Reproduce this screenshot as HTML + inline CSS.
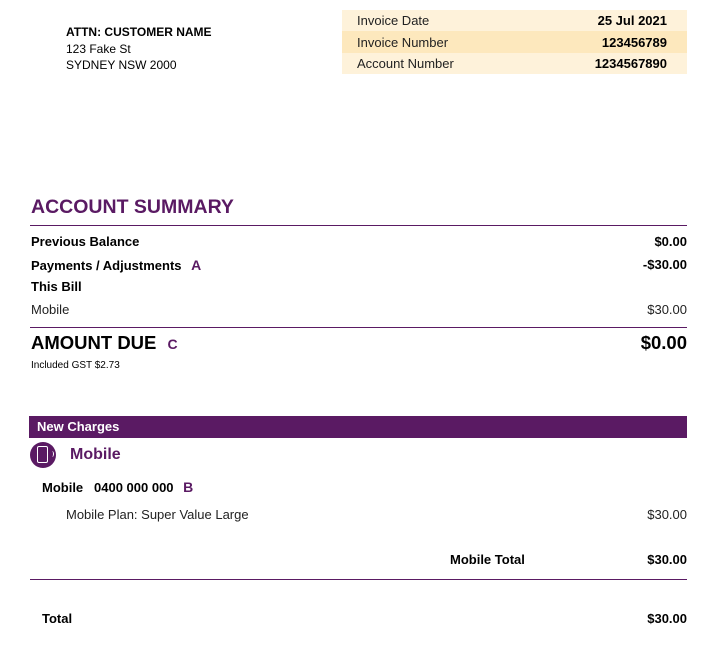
<!DOCTYPE html>
<html><head><meta charset="utf-8"><style>
body{margin:0;width:726px;height:648px;background:#fff;font-family:"Liberation Sans",Arial,sans-serif;color:#000;position:relative;overflow:hidden}
.a{position:absolute;white-space:nowrap}
.r{text-align:right}
.b{font-weight:bold}
.p{color:#5a1a63}
.line{position:absolute;left:30px;width:657px;height:1px;background:#5a1a63}
</style></head><body>
<div class="a b" style="left:66px;top:25px;font-size:12px">ATTN: CUSTOMER NAME</div>
<div class="a" style="left:66px;top:42px;font-size:12px">123 Fake St</div>
<div class="a" style="left:66px;top:58px;font-size:12px">SYDNEY NSW 2000</div>

<div class="a" style="left:342px;top:10px;width:345px;height:21px;background:#fef2da"></div>
<div class="a" style="left:342px;top:31px;width:345px;height:22px;background:#fde8bd"></div>
<div class="a" style="left:342px;top:53px;width:345px;height:21px;background:#fef2da"></div>
<div class="a" style="left:357px;top:13px;font-size:13px;color:#222">Invoice Date</div>
<div class="a" style="left:357px;top:35px;font-size:13px;color:#222">Invoice Number</div>
<div class="a" style="left:357px;top:56px;font-size:13px;color:#222">Account Number</div>
<div class="a b r" style="right:59px;top:13px;font-size:13px">25 Jul 2021</div>
<div class="a b r" style="right:59px;top:35px;font-size:13px">123456789</div>
<div class="a b r" style="right:59px;top:56px;font-size:13px">1234567890</div>

<div class="a b p" style="left:31px;top:196px;font-size:19.5px">ACCOUNT SUMMARY</div>
<div class="line" style="top:225px"></div>
<div class="a b" style="left:31px;top:234px;font-size:13px">Previous Balance</div>
<div class="a b r" style="right:39px;top:234px;font-size:13px">$0.00</div>
<div class="a b" style="left:31px;top:257px;font-size:13px">Payments / Adjustments <span class="p" style="margin-left:6px;font-size:14px">A</span></div>
<div class="a b r" style="right:39px;top:257px;font-size:13px">-$30.00</div>
<div class="a b" style="left:31px;top:279px;font-size:13px">This Bill</div>
<div class="a" style="left:31px;top:302px;font-size:13px;color:#222">Mobile</div>
<div class="a r" style="right:39px;top:302px;font-size:13px;color:#222">$30.00</div>
<div class="line" style="top:327px"></div>
<div class="a b" style="left:31px;top:332px;font-size:18.5px">AMOUNT DUE <span class="p" style="margin-left:6px;font-size:14px">C</span></div>
<div class="a b r" style="right:39px;top:332px;font-size:18.5px">$0.00</div>
<div class="a" style="left:31px;top:360px;font-size:10px">Included GST $2.73</div>

<div class="a" style="left:29px;top:416px;width:658px;height:22px;background:#5a1a63"></div>
<div class="a b" style="left:37px;top:419px;font-size:13px;color:#fff">New Charges</div>
<div class="a" style="left:30px;top:442px;width:26px;height:26px;border-radius:50%;background:#5a1a63"></div>
<div class="a" style="left:37px;top:446px;width:9px;height:15px;border:1.5px solid #fff;border-radius:2px"></div>
<div class="a" style="left:50px;top:451px;width:3px;height:6px;border-right:1px solid #fff;border-radius:50%"></div>
<div class="a b p" style="left:70px;top:446px;font-size:16px">Mobile</div>
<div class="a b" style="left:42px;top:479px;font-size:13px">Mobile&nbsp;&nbsp;&nbsp;0400 000 000 <span class="p" style="margin-left:6px;font-size:14px">B</span></div>
<div class="a" style="left:66px;top:507px;font-size:13px;color:#222">Mobile Plan: Super Value Large</div>
<div class="a r" style="right:39px;top:507px;font-size:13px;color:#222">$30.00</div>
<div class="a b" style="left:450px;top:552px;font-size:13px">Mobile Total</div>
<div class="a b r" style="right:39px;top:552px;font-size:13px">$30.00</div>
<div class="line" style="top:579px"></div>
<div class="a b" style="left:42px;top:611px;font-size:13px">Total</div>
<div class="a b r" style="right:39px;top:611px;font-size:13px">$30.00</div>
</body></html>
